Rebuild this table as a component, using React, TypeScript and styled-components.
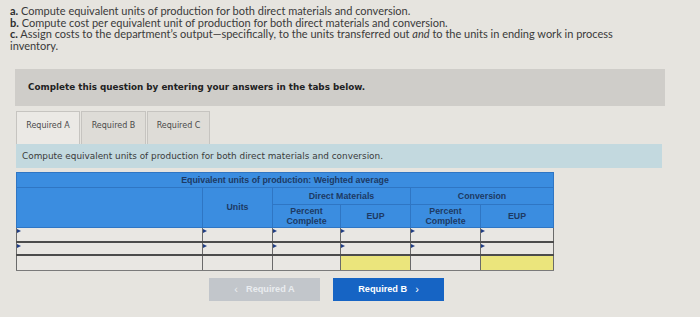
import React from "react";
import styled, { createGlobalStyle, css } from "styled-components";

const GlobalStyle = createGlobalStyle`
  html, body {
    margin: 0;
    padding: 0;
    background: #e6e4df;
    overflow: hidden;
  }
  body {
    font-family: "DejaVu Sans", Verdana, sans-serif;
  }
`;

const Page = styled.div`
  width: 700px;
  height: 317px;
  display: flex;
  flex-direction: column;
  align-items: flex-start;
`;

const Intro = styled.div`
  padding: 5px 0 0 10px;
  font-family: Lato, "Open Sans", sans-serif;
  font-size: 11px;
  line-height: 11.7px;
  color: #3a3a3a;
  p {
    margin: 0;
    white-space: nowrap;
  }
  b {
    font-weight: 700;
    color: #2e2e2e;
  }
`;

const QuestionBox = styled.div`
  margin: 17px 0 0 15px;
  width: 650px;
  height: 37px;
  box-sizing: border-box;
  padding-left: 13px;
  display: flex;
  align-items: center;
  background: #cfcdc9;
  font-weight: 700;
  font-size: 8.8px;
  color: #222;
`;

const TabRow = styled.div`
  margin: 5px 0 0 16px;
  display: flex;
  gap: 1px;
  height: 33px;
`;

const Tab = styled.div<{ $active?: boolean; $w: number }>`
  width: ${(p) => p.$w}px;
  box-sizing: border-box;
  border: 1px solid #c6c4c0;
  border-bottom: none;
  display: flex;
  justify-content: center;
  padding-top: 9px;
  font-size: 8px;
  color: #4a4a4a;
  background: ${(p) => (p.$active ? "#ebe9e5" : "#dedcd7")};
`;

const PromptBar = styled.div`
  margin-left: 16px;
  width: 646px;
  height: 24px;
  box-sizing: border-box;
  padding-left: 6px;
  display: flex;
  align-items: center;
  background: #c3d9df;
  font-size: 8.9px;
  color: #3a3a3a;
`;

const Grid = styled.table`
  margin: 4px 0 0 16px;
  width: 537px;
  border-collapse: collapse;
  table-layout: fixed;
  font-family: "Liberation Sans", Arial, sans-serif;
`;

const HeadCell = styled.th`
  background: #3b8de0;
  color: #1d3a64;
  font-size: 8.8px;
  font-weight: 700;
  line-height: 10px;
  text-align: center;
  vertical-align: middle;
  padding: 0;
  border: 1px solid #2f76c4;
`;

const HeadRow = styled.tr<{ $h: number }>`
  height: ${(p) => p.$h}px;
`;

const BodyRow = styled.tr<{ $h: number; $last?: boolean }>`
  height: ${(p) => p.$h}px;
  td {
    border-bottom: ${(p) => (p.$last ? "1px solid #7a7a7a" : "2px solid #4c4c4c")};
  }
`;

const Cell = styled.td<{ $marked?: boolean; $fill?: boolean }>`
  position: relative;
  padding: 0;
  background: ${(p) => (p.$fill ? "#ebe57c" : "#e9e7e3")};
  border-left: 1px solid #6a6a6a;
  border-right: 1px solid #6a6a6a;
  ${(p) =>
    p.$marked &&
    css`
      &::before {
        content: "";
        position: absolute;
        top: 1px;
        left: 0;
        border-left: 4px solid #1f3d84;
        border-top: 2.5px solid transparent;
        border-bottom: 2.5px solid transparent;
      }
    `}
`;

const ButtonRow = styled.div`
  margin: 7px 0 0 209px;
  display: flex;
  gap: 13px;
`;

const NavButton = styled.div<{ $primary?: boolean }>`
  width: 111px;
  height: 23px;
  display: flex;
  align-items: center;
  justify-content: center;
  gap: 8px;
  font-family: "Liberation Sans", Arial, sans-serif;
  font-size: 9.2px;
  font-weight: 700;
  background: ${(p) => (p.$primary ? "#1664c4" : "#c2c6cb")};
  color: ${(p) => (p.$primary ? "#ffffff" : "#e9ecef")};
  span {
    font-size: 11px;
    font-weight: 400;
  }
`;

type Row = { h: number; marked: boolean; fills: boolean[]; last?: boolean };

const rows: Row[] = [
  { h: 15, marked: true, fills: [false, false, false, false, false, false] },
  { h: 13, marked: true, fills: [false, false, false, false, false, false] },
  { h: 15, marked: false, fills: [false, false, false, true, false, true], last: true },
];

const colWidths = [186, 70, 68, 70, 70, 73];

export default function App() {
  return (
    <Page>
      <GlobalStyle />
      <Intro>
        <p>
          <b>a.</b> Compute equivalent units of production for both direct materials and conversion.
        </p>
        <p>
          <b>b.</b> Compute cost per equivalent unit of production for both direct materials and conversion.
        </p>
        <p>
          <b>c.</b> Assign costs to the department’s output—specifically, to the units transferred out{" "}
          <i>and</i> to the units in ending work in process
        </p>
        <p>inventory.</p>
      </Intro>

      <QuestionBox>Complete this question by entering your answers in the tabs below.</QuestionBox>

      <TabRow>
        <Tab $active $w={64}>Required A</Tab>
        <Tab $w={65}>Required B</Tab>
        <Tab $w={63}>Required C</Tab>
      </TabRow>

      <PromptBar>Compute equivalent units of production for both direct materials and conversion.</PromptBar>

      <Grid>
        <colgroup>
          {colWidths.map((w, i) => (
            <col key={i} style={{ width: w }} />
          ))}
        </colgroup>
        <thead>
          <HeadRow $h={15}>
            <HeadCell colSpan={6}>Equivalent units of production: Weighted average</HeadCell>
          </HeadRow>
          <HeadRow $h={17}>
            <HeadCell rowSpan={2} />
            <HeadCell rowSpan={2}>Units</HeadCell>
            <HeadCell colSpan={2}>Direct Materials</HeadCell>
            <HeadCell colSpan={2}>Conversion</HeadCell>
          </HeadRow>
          <HeadRow $h={23}>
            <HeadCell>
              Percent
              <br />
              Complete
            </HeadCell>
            <HeadCell>EUP</HeadCell>
            <HeadCell>
              Percent
              <br />
              Complete
            </HeadCell>
            <HeadCell>EUP</HeadCell>
          </HeadRow>
        </thead>
        <tbody>
          {rows.map((r, i) => (
            <BodyRow key={i} $h={r.h} $last={r.last}>
              {r.fills.map((f, j) => (
                <Cell key={j} $marked={r.marked} $fill={f} />
              ))}
            </BodyRow>
          ))}
        </tbody>
      </Grid>

      <ButtonRow>
        <NavButton>
          <span>‹</span>Required A
        </NavButton>
        <NavButton $primary>
          Required B<span>›</span>
        </NavButton>
      </ButtonRow>
    </Page>
  );
}
